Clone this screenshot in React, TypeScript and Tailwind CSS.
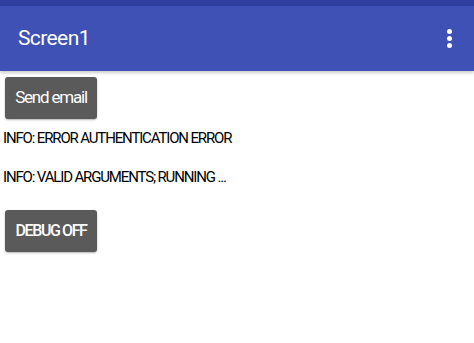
export default function App() {
  return (
    <div className="w-[474px] h-[343px] bg-white font-['Roboto','Liberation_Sans',sans-serif] flex flex-col">
      <div className="h-[6px] bg-[#303f9f]" />
      <header className="h-[65px] bg-[#3f51b5] flex items-center justify-between pl-[18px] pr-[22px] shadow-[0_2px_3px_rgba(0,0,0,0.2)]">
        <h1 className="text-white text-[21px] leading-none tracking-[-0.6px]">Screen1</h1>
        <div className="flex flex-col gap-[2px]">
          <span className="w-[5px] h-[5px] rounded-full bg-white" />
          <span className="w-[5px] h-[5px] rounded-full bg-white" />
          <span className="w-[5px] h-[5px] rounded-full bg-white" />
        </div>
      </header>

      <div className="flex flex-col items-start pl-[5px] pt-[6px]">
        <button className="w-[92px] h-[42px] rounded-[3px] bg-[#5a5a5a] text-white text-[17px] tracking-[-1.2px] shadow-[0_1px_2px_rgba(0,0,0,0.3)]">
          Send email
        </button>
        <p className="mt-[9px] -ml-[2px] text-[15px] leading-[20px] tracking-[-1.15px] text-black">
          INFO: ERROR AUTHENTICATION ERROR
        </p>
        <p className="mt-[19px] -ml-[2px] text-[15px] leading-[20px] tracking-[-1.15px] text-black">
          INFO: VALID ARGUMENTS; RUNNING ...
        </p>
        <button className="mt-[23px] w-[92px] h-[42px] rounded-[3px] bg-[#5a5a5a] text-white text-[16px] font-medium tracking-[-1.4px] shadow-[0_1px_2px_rgba(0,0,0,0.3)]">
          DEBUG OFF
        </button>
      </div>
    </div>
  );
}
